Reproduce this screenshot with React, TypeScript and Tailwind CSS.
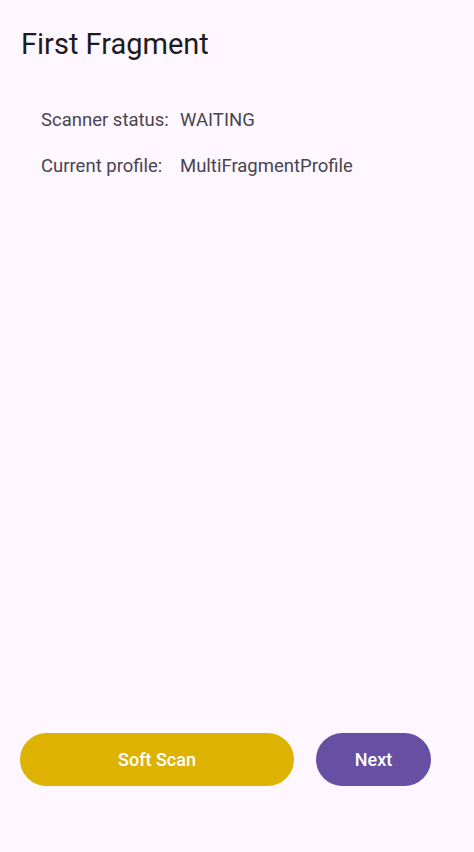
import React from "react";

export default function App() {
  return (
    <div className="w-[474px] h-[852px] bg-[#fef7ff] flex flex-col" style={{ fontFamily: "Roboto, sans-serif" }}>
      <div className="pl-[21px] pt-[26px] text-[29px] leading-[36px] text-[#1d1b20]">First Fragment</div>
      <div className="pl-[41px] pt-[47px] flex flex-col gap-[24px] text-[18.5px] leading-[22px] text-[#49454f]">
        <div className="flex">
          <span className="w-[139px]">Scanner status:</span>
          <span>WAITING</span>
        </div>
        <div className="flex">
          <span className="w-[139px]">Current profile:</span>
          <span>MultiFragmentProfile</span>
        </div>
      </div>
      <div className="flex-1" />
      <div className="flex pl-[20px] gap-[22px] pb-[66px]">
        <button className="w-[274px] h-[53px] rounded-full bg-[#ddb200] text-white text-[18px] font-medium">Soft Scan</button>
        <button className="w-[115px] h-[53px] rounded-full bg-[#674fa3] text-white text-[18px] font-medium">Next</button>
      </div>
    </div>
  );
}
